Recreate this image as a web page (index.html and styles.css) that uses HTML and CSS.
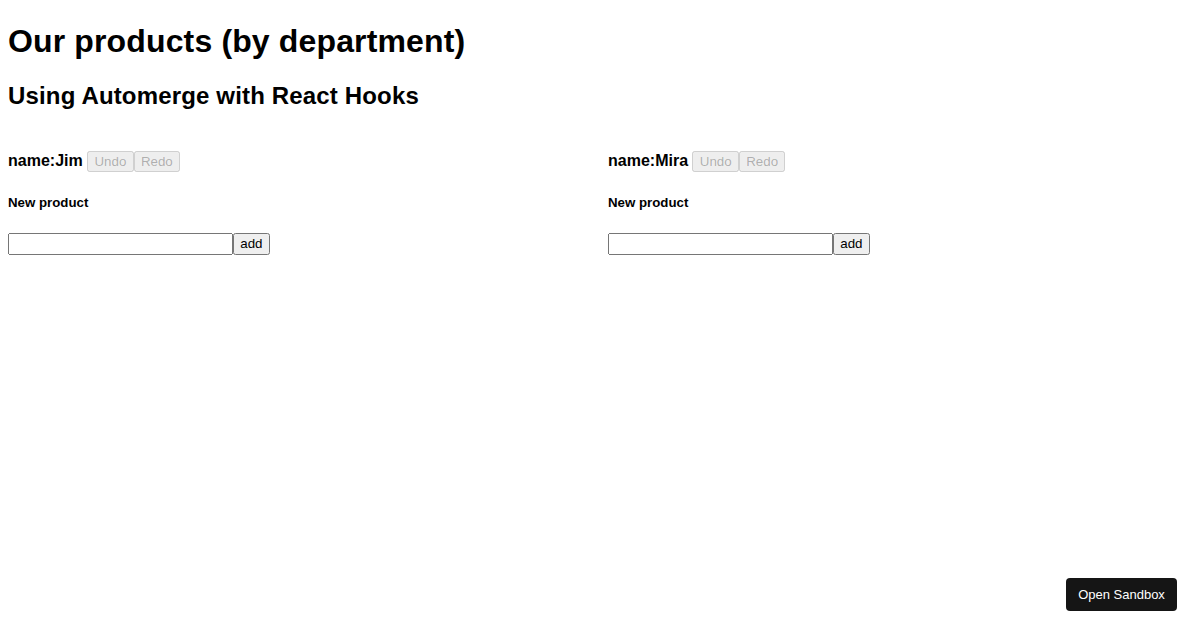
FILE: index.html
```html
<!DOCTYPE html>
<html>
<head>
<meta charset="utf-8">
<link rel="stylesheet" href="styles.css">
</head>
<body>
<h1 class="title">Our products (by department)</h1>
<h2 class="subtitle">Using Automerge with React Hooks</h2>
<div class="columns">
  <div class="column">
    <h3 class="user">name:Jim <button class="hist" disabled>Undo</button><button class="hist" disabled>Redo</button></h3>
    <h5 class="label">New product</h5>
    <form class="add-form"><input type="text" class="product-input"><button type="button" class="add-btn">add</button></form>
  </div>
  <div class="column">
    <h3 class="user">name:Mira <button class="hist" disabled>Undo</button><button class="hist" disabled>Redo</button></h3>
    <h5 class="label">New product</h5>
    <form class="add-form"><input type="text" class="product-input"><button type="button" class="add-btn">add</button></form>
  </div>
</div>
<a class="sandbox-btn">Open Sandbox</a>
</body>
</html>
```
FILE: styles.css
```css
html, body {
  font-family: "Liberation Sans", Arial, sans-serif;
  color: #000;
  background: #fff;
}
body {
  margin: 8px;
}
.title {
  font-size: 32px;
  margin: 15.44px 0 21.44px;
  letter-spacing: 0.14px;
}
.subtitle {
  font-size: 24px;
  margin: 19.92px 0;
  letter-spacing: 0.16px;
}
.columns {
  display: flex;
}
.column {
  width: 600px;
  flex: 0 0 600px;
}
.user {
  font-size: 16px;
  margin: 21.7px 0 21.7px;
}
.label {
  font-size: 13.28px;
  margin: 22.18px 0 23.2px;
}
.hist, .add-btn {
  font-family: "Liberation Sans", Arial, sans-serif;
  font-size: 13.33px;
  vertical-align: baseline;
  padding: 1px 5.3px;
}
.product-input {
  width: 225px;
  box-sizing: border-box;
  height: 22px;
  font-family: "Liberation Sans", Arial, sans-serif;
  font-size: 13.33px;
  margin: 0;
}
.add-btn {
  margin: 0;
  height: 22px;
}
.sandbox-btn {
  position: fixed;
  right: 23px;
  bottom: 19px;
  width: 111px;
  height: 33px;
  box-sizing: border-box;
  display: flex;
  align-items: center;
  justify-content: center;
  background: #151515;
  color: #fff;
  border-radius: 4px;
  font-size: 13px;
  text-decoration: none;
}
```
